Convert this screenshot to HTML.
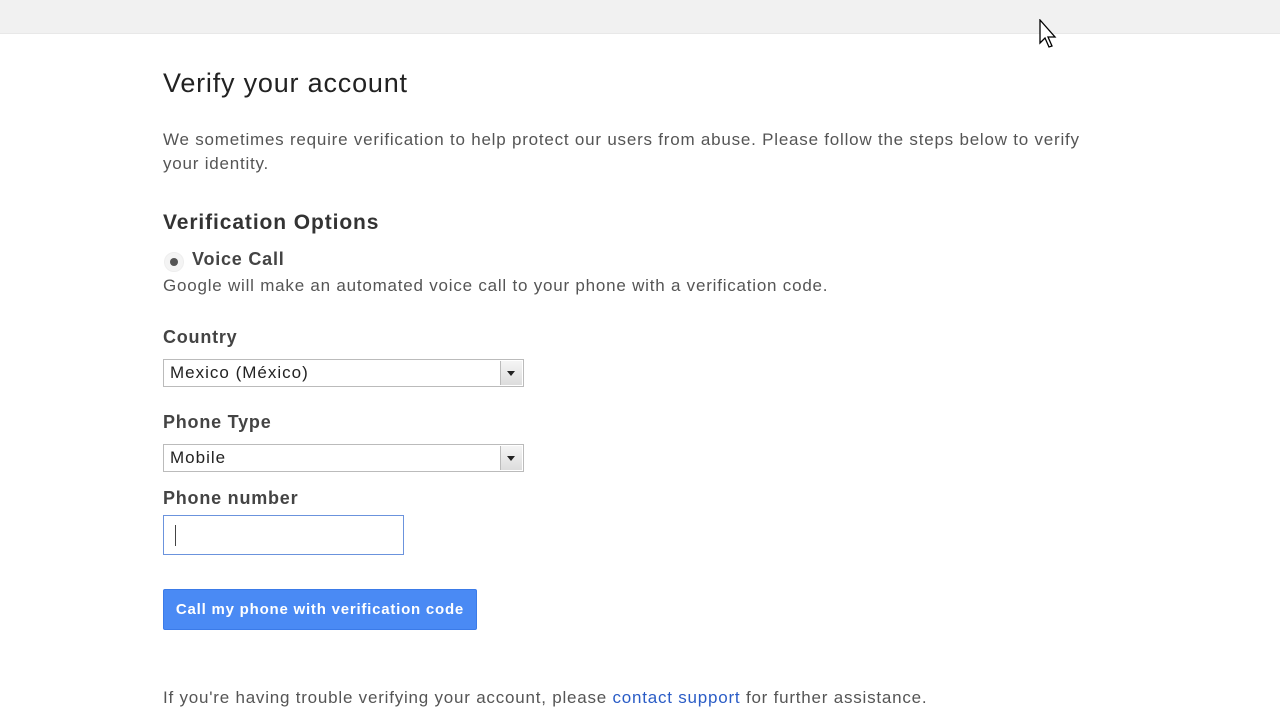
<!DOCTYPE html>
<html><head><style>
body{margin:0;width:1280px;height:720px;background:#fff;font-family:"Liberation Sans",Arial,sans-serif;color:#333;position:relative;overflow:hidden;letter-spacing:0.78px}
.top{position:absolute;left:0;top:0;width:1280px;height:33px;background:#f1f1f1;border-bottom:1px solid #e8e8e8}
.a{position:absolute;white-space:nowrap}
h1{position:absolute;left:163px;top:68px;margin:0;font-weight:normal;font-size:27px;color:#222;letter-spacing:0.8px}
.p{font-size:17px;color:#555;line-height:24px}
.lbl{font-size:18px;font-weight:bold;color:#444}
.sel{position:absolute;left:163px;width:359px;height:26px;border:1px solid #bbb;font-size:17px;line-height:26px;box-sizing:content-box}
.sel span{padding-left:6px;color:#222;letter-spacing:1px}
.sel i{position:absolute;right:1px;top:1px;width:21px;height:24px;background:linear-gradient(#f5f5f5,#ddd);border-left:1px solid #bbb}
.sel i:after{content:"";position:absolute;left:6px;top:10px;border:4.5px solid transparent;border-top:5px solid #222}
</style></head><body>
<div class="top"></div>
<svg class="a" style="left:1039px;top:19px" width="20" height="30" viewBox="0 0 20 30"><path d="M1 1 L1 24 L6 19 L10 28 L13 27 L9 18 L16 18 Z" fill="#fff" stroke="#000" stroke-width="1.3"/></svg>
<h1>Verify your account</h1>
<div class="a p" style="left:163px;top:128px">We sometimes require verification to help protect our users from abuse. Please follow the steps below to verify<br>your identity.</div>
<div class="a" style="left:163px;top:211px;font-size:21px;font-weight:bold;color:#333;letter-spacing:0.9px">Verification Options</div>
<div class="a" style="left:164px;top:252px;width:18px;height:18px;border-radius:50%;background:#f4f4f4;border:1px solid #eee"></div>
<div class="a" style="left:170px;top:258px;width:8px;height:8px;border-radius:50%;background:#555"></div>
<div class="a" style="left:192px;top:249px;font-size:18px;font-weight:bold;color:#444">Voice Call</div>
<div class="a p" style="left:163px;top:274px">Google will make an automated voice call to your phone with a verification code.</div>
<div class="a lbl" style="left:163px;top:327px">Country</div>
<div class="sel" style="top:359px"><span>Mexico (México)</span><i></i></div>
<div class="a lbl" style="left:163px;top:412px">Phone Type</div>
<div class="sel" style="top:444px"><span>Mobile</span><i></i></div>
<div class="a lbl" style="left:163px;top:488px">Phone number</div>
<div class="a" style="left:163px;top:515px;width:239px;height:38px;border:1px solid #6b93dd"></div>
<div class="a" style="left:175px;top:525px;width:1px;height:21px;background:#444"></div>
<div class="a" style="left:163px;top:589px;width:314px;height:41px;background:#4a8af4;border:1px solid #3b7be8;border-radius:2px;box-sizing:border-box;color:#fff;font-weight:bold;font-size:15px;line-height:39px;text-align:center">Call my phone with verification code</div>
<div class="a p" style="left:163px;top:686px">If you're having trouble verifying your account, please <span style="color:#2a5cc6">contact support</span> for further assistance.</div>
</body></html>
